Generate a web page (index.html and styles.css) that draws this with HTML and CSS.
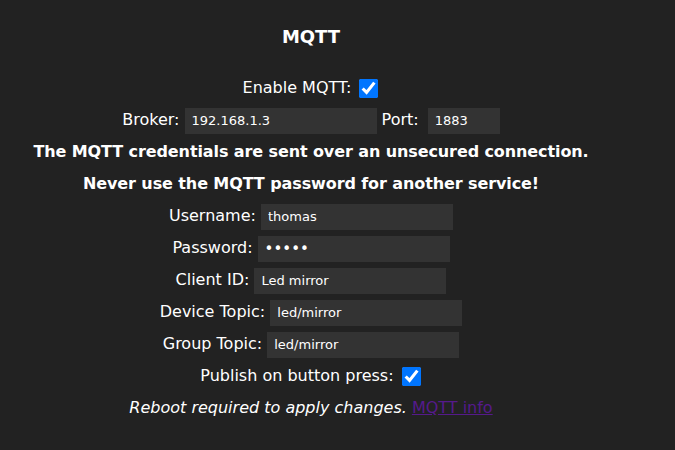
FILE: index.html
```html
<!DOCTYPE html>
<html>
<head>
<meta charset="utf-8">
<link rel="stylesheet" href="styles.css">
</head>
<body>
<div class="page">
  <h3 class="title">MQTT</h3>
  <div class="row">Enable MQTT: <input type="checkbox" class="chk" checked></div>
  <div class="row">Broker: <input type="text" class="field" value="192.168.1.3"> Port: <input type="text" class="field port" value="1883"></div>
  <div class="row bold">The MQTT credentials are sent over an unsecured connection.</div>
  <div class="row bold">Never use the MQTT password for another service!</div>
  <div class="row">Username: <input type="text" class="field" value="thomas"></div>
  <div class="row">Password: <input type="password" class="field pass" value="12345"></div>
  <div class="row">Client ID: <input type="text" class="field" value="Led mirror"></div>
  <div class="row">Device Topic: <input type="text" class="field" value="led/mirror"></div>
  <div class="row">Group Topic: <input type="text" class="field" value="led/mirror"></div>
  <div class="row">Publish on button press: <input type="checkbox" class="chk" checked></div>
  <div class="row"><i>Reboot required to apply changes.</i> <a class="link" href="#">MQTT info</a></div>
</div>
</body>
</html>
```

FILE: styles.css
```css
html, body {
  margin: 0;
  padding: 0;
  background: #222222;
}
body {
  font-family: "DejaVu Sans", Verdana, sans-serif;
  color: #ffffff;
  font-size: 16px;
}
.page {
  width: 622px;
  text-align: center;
}
.title {
  font-size: 18px;
  font-weight: bold;
  line-height: 32px;
  margin: 21px 0 19px 0;
}
.row {
  height: 32px;
  line-height: 32px;
  white-space: nowrap;
}
.bold {
  font-weight: bold;
  letter-spacing: -0.1px;
}
.field {
  box-sizing: border-box;
  width: 192px;
  height: 26px;
  border: 0;
  padding: 0 7px;
  margin: 0;
  background: #333333;
  color: #ffffff;
  font-family: "DejaVu Sans", Verdana, sans-serif;
  font-size: 13px;
  vertical-align: middle;
  outline: none;
}
.port {
  width: 72px;
  margin-left: 4px;
}
.pass {
  font-size: 15px;
}
.chk {
  transform: scale(1.5);
  vertical-align: middle;
  margin: 0 4px 0 6px;
}
.link {
  color: #551a8b;
}
```
